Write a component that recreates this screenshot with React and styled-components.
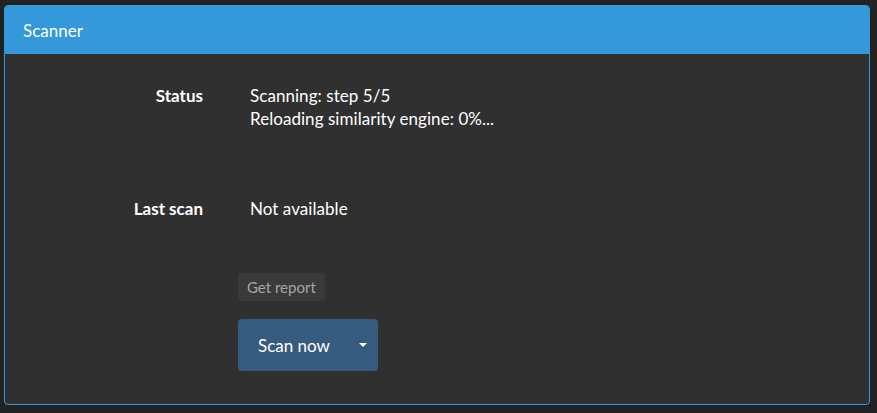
import React from "react";
import styled, { createGlobalStyle } from "styled-components";

const GlobalStyle = createGlobalStyle`
  html, body {
    margin: 0;
    padding: 0;
    background: #222222;
  }
  body {
    font-family: Lato, "Open Sans", sans-serif;
    color: #ffffff;
  }
`;

const Page = styled.div`
  padding: 5px 7px 0 4px;
`;

const Panel = styled.section`
  border: 1px solid #3498db;
  border-radius: 4px;
  background: #303030;
  overflow: hidden;
`;

const PanelHeading = styled.header`
  background: #3498db;
  height: 48px;
  padding: 0 18px;
  display: flex;
  align-items: center;
  font-size: 17px;
  color: #ffffff;
`;

const PanelBody = styled.div`
  padding: 30px 0 33px;
`;

const Row = styled.div`
  display: grid;
  grid-template-columns: 198px 1fr;
  column-gap: 47px;
  margin-top: ${(p) => p.$gap || 0}px;
`;

const Label = styled.div`
  text-align: right;
  font-weight: bold;
  font-size: 17px;
  line-height: 23px;
`;

const Value = styled.div`
  font-size: 17px;
  line-height: 23px;
  letter-spacing: 0.05px;
`;

const Actions = styled.div`
  margin-top: 53px;
  padding-left: 233px;
  display: flex;
  flex-direction: column;
  align-items: flex-start;
  gap: 18px;
`;

const SmallButton = styled.button`
  font-family: inherit;
  font-size: 15px;
  height: 28px;
  padding: 0 9px;
  border: none;
  border-radius: 3px;
  background: #3a3a3a;
  color: #a6a6a6;
`;

const SplitButton = styled.div`
  display: flex;
  height: 52px;
  border-radius: 4px;
  background: #375a7f;
  overflow: hidden;
`;

const MainButton = styled.button`
  font-family: inherit;
  font-size: 17px;
  border: none;
  background: transparent;
  color: #ffffff;
  padding: 0 16px 0 20px;
`;

const CaretButton = styled.button`
  border: none;
  background: transparent;
  padding: 0 11px 0 13px;
  display: flex;
  align-items: center;
`;

const Caret = styled.span`
  width: 0;
  height: 0;
  border-left: 4px solid transparent;
  border-right: 4px solid transparent;
  border-top: 4px solid #ffffff;
`;

export default function App() {
  return (
    <Page>
      <GlobalStyle />
      <Panel>
        <PanelHeading>Scanner</PanelHeading>
        <PanelBody>
          <Row>
            <Label>Status</Label>
            <Value>
              Scanning: step 5/5
              <br />
              Reloading similarity engine: 0%...
            </Value>
          </Row>
          <Row $gap={67}>
            <Label>Last scan</Label>
            <Value>Not available</Value>
          </Row>
          <Actions>
            <SmallButton>Get report</SmallButton>
            <SplitButton>
              <MainButton>Scan now</MainButton>
              <CaretButton>
                <Caret />
              </CaretButton>
            </SplitButton>
          </Actions>
        </PanelBody>
      </Panel>
    </Page>
  );
}
